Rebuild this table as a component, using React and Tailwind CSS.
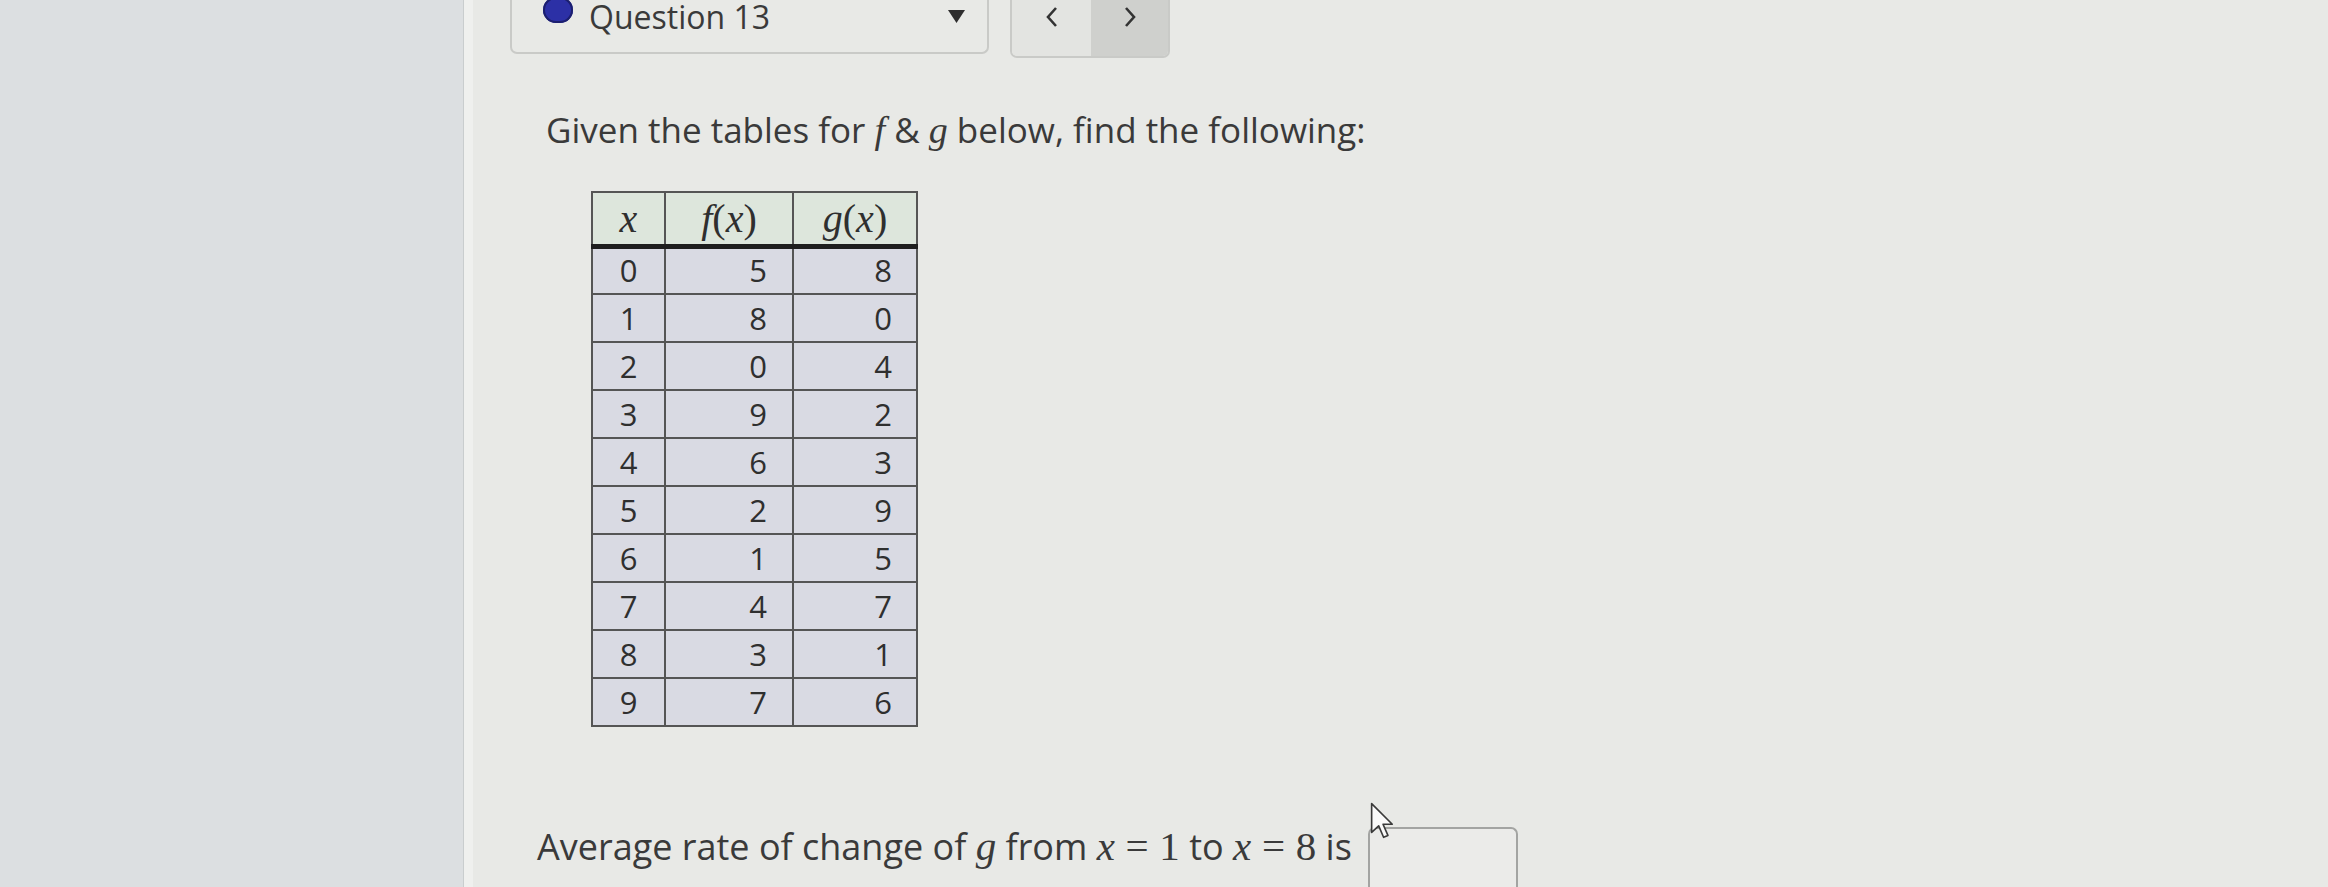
const rows = [
  [0, 5, 8],
  [1, 8, 0],
  [2, 0, 4],
  [3, 9, 2],
  [4, 6, 3],
  [5, 2, 9],
  [6, 1, 5],
  [7, 4, 7],
  [8, 3, 1],
  [9, 7, 6],
];

// math pieces: italic serif letters, upright symbols
function M({ children }) {
  return <span className="font-['Liberation_Serif',serif] italic">{children}</span>;
}

function Sym({ children }) {
  return <span className="font-['Liberation_Serif',serif]">{children}</span>;
}

function TopBar() {
  return (
    <div className="flex items-start gap-[21px] pl-[37px]">
      {/* question picker */}
      <div className="flex h-[54px] w-[479px] items-start rounded-b-[7px] border-2 border-t-0 border-[#c9cac7] pl-[31px] pr-[22px]">
        <span className="-mt-[3px] h-[26px] w-[30px] shrink-0 rounded-full bg-[#2c30a6] shadow-[inset_0_0_0_2px_#1c1f6e]" />
        <span className="-mt-[2px] ml-[16px] text-[32px] leading-[38px] text-[#3a3a3a]">Question 13</span>
        <svg className="ml-auto mt-[10px]" width="17" height="13" viewBox="0 0 17 13">
          <polygon points="0,0 17,0 8.5,13" fill="#2e2e2e" />
        </svg>
      </div>
      {/* prev / next */}
      <div className="flex h-[58px] w-[160px] overflow-hidden rounded-b-[7px] border-2 border-t-0 border-[#c9cac7]">
        <div className="flex w-[79px] items-start justify-center bg-[#e3e4e1] pt-[6px]">
          <svg width="14" height="22" viewBox="0 0 14 22">
            <polyline points="11,2 3,11 11,20" fill="none" stroke="#333" strokeWidth="2.6" />
          </svg>
        </div>
        <div className="flex flex-1 items-start justify-center bg-[#cfd0cd] pt-[6px]">
          <svg width="14" height="22" viewBox="0 0 14 22">
            <polyline points="3,2 11,11 3,20" fill="none" stroke="#333" strokeWidth="2.6" />
          </svg>
        </div>
      </div>
    </div>
  );
}

function ValueTable() {
  const head = "border-2 border-b-[5px] border-[#555] border-b-[#1e1e1e] text-center font-normal text-[40px] leading-none";
  return (
    <table className="ml-[118px] mt-[39px] self-start table-fixed border-collapse text-[31px] text-[#2f2f2f]">
      <thead>
        <tr className="h-[54px] bg-[#dde6dc]">
          <th className={`w-[73px] ${head}`}>
            <M>x</M>
          </th>
          <th className={`w-[128px] ${head}`}>
            <M>f</M>
            <Sym>(</Sym>
            <M>x</M>
            <Sym>)</Sym>
          </th>
          <th className={`w-[124px] ${head}`}>
            <M>g</M>
            <Sym>(</Sym>
            <M>x</M>
            <Sym>)</Sym>
          </th>
        </tr>
      </thead>
      <tbody>
        {rows.map((r) => (
          <tr key={r[0]} className="h-[48px] bg-[#d9dae3]">
            <td className="border-2 border-[#555] text-center leading-none">{r[0]}</td>
            <td className="border-2 border-[#555] pr-[25px] text-right leading-none">{r[1]}</td>
            <td className="border-2 border-[#555] pr-[24px] text-right leading-none">{r[2]}</td>
          </tr>
        ))}
      </tbody>
    </table>
  );
}

export default function App() {
  return (
    <div className="flex h-[887px] w-[2328px] overflow-hidden bg-[#e8e9e6] font-['Open_Sans','Noto_Sans',sans-serif]">
      <div className="w-[463px] shrink-0 bg-[#dcdfe1]" />
      <div className="w-[10px] shrink-0 border-l border-[#c9cdce] bg-[#eff0ee]" />

      <main className="flex min-w-0 flex-1 flex-col">
        <TopBar />
        <div className="ml-[35px] mt-[6px] h-[2px] bg-[#b5b6b3]" />

        <p className="ml-[73px] mt-[42px] text-[35px] leading-[44px] text-[#3a3a3a]">
          Given the tables for <span className="text-[38px]"><M>f</M></span> &amp;{" "}
          <span className="text-[38px]"><M>g</M></span> below, find the following:
        </p>

        <ValueTable />

        <div className="ml-[64px] mt-[95px] flex items-start">
          <p className="text-[36px] leading-[44px] text-[#3a3a3a]">
            Average rate of change of <span className="text-[41px]"><M>g</M></span> from{" "}
            <span className="text-[41px]"><M>x</M> <Sym>=</Sym> <Sym>1</Sym></span> to{" "}
            <span className="text-[41px]"><M>x</M> <Sym>=</Sym> <Sym>8</Sym></span> is
          </p>
          <div className="relative ml-[16px] mt-[5px] h-[80px] w-[150px] rounded-t-[7px] border-2 border-b-0 border-[#a3a4a2] bg-[#ebebe9]">
            {/* mouse pointer over the answer box */}
            <svg className="absolute left-[0px] top-[-27px]" width="25" height="38" viewBox="0 0 23 35">
              <path d="M1.5 1.5 L1.5 28 L8 22 L12.5 32.5 L16.5 30.8 L12 20.5 L20.5 20.5 Z" fill="#fafafa" stroke="#3a3a3a" strokeWidth="1.5" strokeLinejoin="round" />
            </svg>
          </div>
        </div>
      </main>
    </div>
  );
}
